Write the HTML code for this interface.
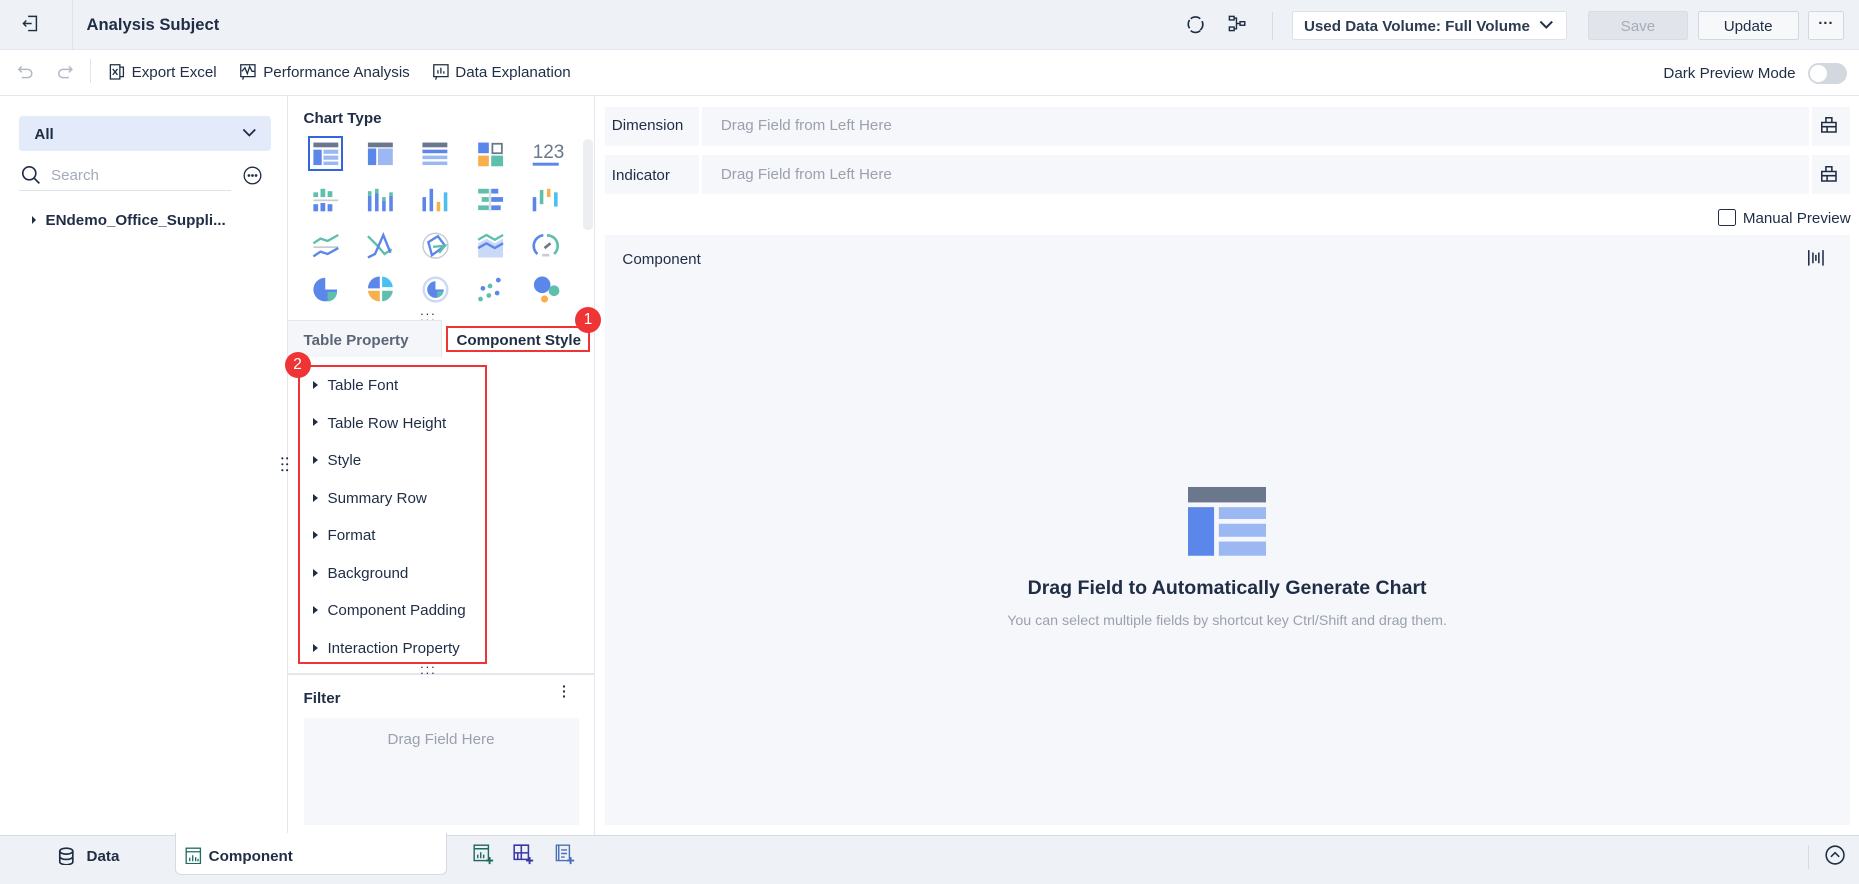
<!DOCTYPE html>
<html><head><meta charset="utf-8">
<style>
*{box-sizing:border-box;margin:0;padding:0}
html,body{width:1859px;height:884px;overflow:hidden;background:#fff}
#w{zoom:1.18559;width:1568px;height:746px;position:relative;font-family:"Liberation Sans",sans-serif;font-size:12.8px;color:#1f2d45;overflow:hidden}
.a{position:absolute}
.b{font-weight:bold}
.t{white-space:nowrap}
.tri{display:inline-block;width:0;height:0;border-left:5px solid #1f2d45;border-top:4px solid transparent;border-bottom:4px solid transparent;margin-right:8px;vertical-align:1px}
</style></head><body><div id="w">
<!-- top bar -->
<div class="a" style="left:0;top:0;width:1568px;height:42px;background:#eef1f6;border-bottom:1px solid #e1e5ec"></div>
<div class="a" style="left:61px;top:0;width:1px;height:42px;background:#dde1e8"></div>
<svg class="a" style="left:18px;top:12px" width="16" height="16" viewBox="0 0 16 16" fill="none" stroke="#1f2d45" stroke-width="1.2"><path d="M6 2h7v12H6M9 8H2M4.5 5.5L2 8l2.5 2.5"/></svg>
<div class="a b t" style="left:73px;top:13px;font-size:14px">Analysis Subject</div>
<svg class="a" style="left:1000px;top:12px" width="17" height="17" viewBox="0 0 17 17" fill="none" stroke="#1f2d45" stroke-width="1.4"><path d="M4 4a6 6 0 0 1 8 0M13.5 6a6 6 0 0 1-1.5 7.5M12 14a6 6 0 0 1-8 0M3 12a6 6 0 0 1 0-7"/></svg>
<svg class="a" style="left:1035px;top:12px" width="17" height="17" viewBox="0 0 17 17" fill="none" stroke="#1f2d45" stroke-width="1.2"><rect x="2" y="2" width="4" height="3"/><rect x="2" y="11" width="4" height="3"/><rect x="11" y="6.5" width="4" height="3"/><path d="M6 3.5h2v9H6M8 8h3"/></svg>
<div class="a" style="left:1073px;top:10px;width:1px;height:24px;background:#d6dae2"></div>
<div class="a b t" style="left:1090px;top:9px;width:232px;height:25px;background:#fff;border:1px solid #dde1e8;border-radius:2px;padding:5px 0 0 9px;color:#2c3a52">Used Data Volume: Full Volume</div>
<svg class="a" style="left:1297px;top:15px" width="14" height="12" viewBox="0 0 14 12" fill="none" stroke="#1f2d45" stroke-width="1.6"><path d="M2 3l5 5 5-5"/></svg>
<div class="a t" style="left:1339px;top:9px;width:85px;height:25px;background:#e1e4ea;border:1px solid #d8dce3;border-radius:2px;text-align:center;padding-top:5px;color:#a6adb9">Save</div>
<div class="a t" style="left:1432px;top:9px;width:85px;height:25px;background:#f7f8fa;border:1px solid #d3d7df;border-radius:2px;text-align:center;padding-top:5px">Update</div>
<div class="a t" style="left:1525px;top:9px;width:30px;height:25px;background:#f7f8fa;border:1px solid #d3d7df;border-radius:2px;text-align:center;padding-top:3px;font-weight:bold">···</div>
<!-- toolbar -->
<div class="a" style="left:0;top:80px;width:1568px;height:1px;background:#e4e7ec"></div>
<svg class="a" style="left:14px;top:54px" width="14" height="14" viewBox="0 0 14 14" fill="none" stroke="#b4bac5" stroke-width="1.3"><path d="M4 2L1.5 4.5 4 7M1.5 4.5H9a3.5 3.5 0 0 1 0 7H4"/></svg>
<svg class="a" style="left:48px;top:54px" width="14" height="14" viewBox="0 0 14 14" fill="none" stroke="#b4bac5" stroke-width="1.3"><path d="M10 2l2.5 2.5L10 7M12.5 4.5H5a3.5 3.5 0 0 0 0 7h5"/></svg>
<div class="a" style="left:76px;top:50px;width:1px;height:20px;background:#e1e4ea"></div>
<svg class="a" style="left:91px;top:53px" width="15" height="15" viewBox="0 0 15 15" fill="none" stroke="#1f2d45" stroke-width="1.1"><path d="M2 1.5h8v12H2zM10 3.5h3v8h-3"/><path d="M4 5l4 5M8 5l-4 5"/></svg>
<div class="a t" style="left:111px;top:54px">Export Excel</div>
<svg class="a" style="left:202px;top:53px" width="15" height="15" viewBox="0 0 15 15" fill="none" stroke="#1f2d45" stroke-width="1.1"><path d="M1.5 1.5h12v10h-12zM4 11.5L3 14"/><path d="M2.5 7l2.5-3 2 5 2-6 2 4h2"/></svg>
<div class="a t" style="left:222px;top:54px">Performance Analysis</div>
<svg class="a" style="left:364px;top:53px" width="15" height="15" viewBox="0 0 15 15" fill="none" stroke="#1f2d45" stroke-width="1.1"><path d="M1.5 1.5h12v10h-12zM4 11.5L3 14M5 9V6M7.5 9V4M10 9V7"/></svg>
<div class="a t" style="left:384px;top:54px">Data Explanation</div>
<div class="a t" style="left:1403px;top:55px">Dark Preview Mode</div>
<div class="a" style="left:1525px;top:53px;width:33px;height:18px;border-radius:9px;background:#d3d7de"></div>
<div class="a" style="left:1527px;top:55px;width:14px;height:14px;border-radius:7px;background:#fff"></div>
<!-- left panel -->
<div class="a" style="left:242px;top:81px;width:1px;height:623px;background:#e4e7ec"></div>
<div class="a" style="left:16px;top:98px;width:213px;height:29px;background:#e3ebfb;border-radius:3px"></div>
<div class="a b t" style="left:29px;top:106px">All</div>
<svg class="a" style="left:203px;top:106px" width="14" height="12" viewBox="0 0 14 12" fill="none" stroke="#1f2d45" stroke-width="1.5"><path d="M2 3l5 5 5-5"/></svg>
<svg class="a" style="left:18px;top:139px" width="17" height="17" viewBox="0 0 17 17" fill="none" stroke="#1f2d45" stroke-width="1.4"><circle cx="7" cy="7" r="5.5"/><path d="M11 11l4.5 4.5"/></svg>
<div class="a t" style="left:43px;top:141px;color:#a3aab7">Search</div>
<div class="a" style="left:16px;top:160px;width:179px;height:1px;background:#dde1e8"></div>
<svg class="a" style="left:205px;top:140px" width="16" height="16" viewBox="0 0 16 16" fill="none" stroke="#1f2d45" stroke-width="1.1"><circle cx="8" cy="8" r="7"/><circle cx="5" cy="8" r=".6" fill="#1f2d45"/><circle cx="8" cy="8" r=".6" fill="#1f2d45"/><circle cx="11" cy="8" r=".6" fill="#1f2d45"/></svg>
<div class="a b t" style="left:27px;top:179px"><span class="tri" style="border-left-width:4px;border-top-width:3.5px;border-bottom-width:3.5px;margin-right:8px"></span>ENdemo_Office_Suppli...</div>
<svg class="a" style="left:236px;top:385px" width="8" height="15" viewBox="0 0 8 15" fill="#1f2d45"><circle cx="2" cy="2" r=".9"/><circle cx="6" cy="2" r=".9"/><circle cx="2" cy="7" r=".9"/><circle cx="6" cy="7" r=".9"/><circle cx="2" cy="12" r=".9"/><circle cx="6" cy="12" r=".9"/></svg>
<!-- middle panel -->
<div class="a" style="left:501px;top:81px;width:1px;height:623px;background:#e4e7ec"></div>
<div class="a b t" style="left:256px;top:93px">Chart Type</div>
<div class="a" style="left:492px;top:117px;width:8px;height:77px;background:#eceef2;border-radius:4px"></div>
<div class="a" style="left:260px;top:115px;width:29px;height:29px;border:2px solid #3366dd"></div>
<svg class="a" style="left:262px;top:117px" width="236" height="140" viewBox="0 0 236 140">
<g transform="translate(2,3)"><rect width="21" height="4" fill="#6b778c"/><rect y="6" width="7" height="13" fill="#5b86ea"/><rect x="8.5" y="6" width="12.5" height="3.5" fill="#9cb8f3"/><rect x="8.5" y="11" width="12.5" height="3.5" fill="#9cb8f3"/><rect x="8.5" y="16" width="12.5" height="3" fill="#9cb8f3"/></g>
<g transform="translate(48,3)"><rect width="21" height="4" fill="#6b778c"/><rect y="5" width="7" height="14" fill="#5b86ea"/><rect x="8.5" y="5" width="12.5" height="14" fill="#9cb8f3"/></g>
<g transform="translate(94,3)"><rect width="21" height="4" fill="#6b778c"/><rect y="6" width="21" height="3" fill="#5b86ea"/><rect y="11" width="21" height="3" fill="#9cb8f3"/><rect y="16" width="21" height="3" fill="#9cb8f3"/></g>
<g transform="translate(141,3)"><rect width="9" height="9" fill="#5b86ea"/><rect x="12" y="1" width="8" height="8" fill="none" stroke="#6b778c" stroke-width="1.5"/><rect y="11" width="9" height="9" fill="#f7b04b"/><rect x="11" y="11" width="10" height="9" fill="#5ec0ac"/></g>
<g transform="translate(187,1)"><text x="0" y="15" font-family="Liberation Sans" font-size="16" fill="#6b778c">123</text><rect y="19" width="22" height="2.5" fill="#5b86ea"/></g>
<g transform="translate(2,42)"><rect x="6" y="0" width="4" height="7" fill="#5ec0ac"/><rect x="12" y="2" width="4" height="5" fill="#5ec0ac"/><rect x="0" y="3" width="4" height="4" fill="#5ec0ac"/><rect y="9" width="21" height="1.5" fill="#c6ccd6"/><rect x="0" y="13" width="4" height="6" fill="#5b86ea"/><rect x="6" y="12" width="4" height="7" fill="#5b86ea"/><rect x="12" y="13" width="4" height="6" fill="#5b86ea"/></g>
<g transform="translate(48,42)"><rect x="0" y="6" width="3" height="13" fill="#5b86ea"/><rect x="0" y="2" width="3" height="4" fill="#5ec0ac"/><rect x="6" y="4" width="3" height="15" fill="#5b86ea"/><rect x="6" y="0" width="3" height="4" fill="#5ec0ac"/><rect x="12" y="10" width="3" height="9" fill="#5b86ea"/><rect x="12" y="7" width="3" height="3" fill="#5ec0ac"/><rect x="18" y="6" width="3" height="13" fill="#5b86ea"/><rect x="18" y="3" width="3" height="3" fill="#5ec0ac"/></g>
<g transform="translate(94,42)"><rect x="0" y="7" width="3" height="12" fill="#5b86ea"/><rect x="6" y="0" width="3" height="19" fill="#5b86ea"/><rect x="12" y="11" width="3" height="8" fill="#f7b04b"/><rect x="18" y="3" width="3" height="16" fill="#4bbff0"/></g>
<g transform="translate(141,42)"><rect x="0" y="0" width="9" height="4" fill="#5ec0ac"/><rect x="11" y="0" width="6" height="4" fill="#5b86ea"/><rect x="3" y="7" width="6" height="4" fill="#5ec0ac"/><rect x="11" y="7" width="10" height="4" fill="#5b86ea"/><rect x="0" y="14" width="9" height="4" fill="#5ec0ac"/><rect x="11" y="14" width="8" height="4" fill="#5b86ea"/><rect x="9.5" y="0" width="1" height="19" fill="#c6ccd6"/></g>
<g transform="translate(187,42)"><rect x="0" y="7" width="3" height="12" fill="#5b86ea"/><rect x="6" y="1" width="3" height="12" fill="#5ec0ac"/><rect x="12" y="0" width="3" height="7" fill="#f7b04b"/><rect x="18" y="3" width="3" height="12" fill="#4bbff0"/></g>
<g transform="translate(2,80)" fill="none" stroke-width="2"><path d="M0 8l6-4 6 2 9-5" stroke="#5ec0ac"/><rect x="0" y="10.5" width="21" height="1.5" fill="#c6ccd6" stroke="none"/><path d="M0 19l6-4 6 2 9-5" stroke="#5b86ea"/></g>
<g transform="translate(48,80)" fill="none" stroke-width="2"><path d="M0 2l8 8 6 7 6-4" stroke="#5ec0ac"/><path d="M0 20l6-3 7-16 6 15" stroke="#5b86ea"/></g>
<g transform="translate(94,79)" fill="none"><circle cx="11" cy="11" r="10.5" stroke="#c6ccd6" stroke-width="1.2"/><path d="M5 8l8-5 6 8-11 8z" stroke="#5b86ea" stroke-width="2"/><path d="M9 12l10-1-5 6" stroke="#5ec0ac" stroke-width="2"/></g>
<g transform="translate(141,80)"><path d="M0 8l7-4 7 4 7-4v16H0z" fill="#c9d9f7"/><path d="M0 5l7-4 7 4 7-4" fill="none" stroke="#5ec0ac" stroke-width="2"/><path d="M0 12l7-4 7 4 7-4" fill="none" stroke="#5b86ea" stroke-width="2"/></g>
<g transform="translate(187,79)" fill="none" stroke-width="2.2"><path d="M4 18A9 9 0 0 1 9 2.2" stroke="#5b86ea"/><path d="M12 2.2A9 9 0 0 1 18 18" stroke="#5ec0ac"/><path d="M10 13l5-4" stroke="#6b778c"/><path d="M8 19h6" stroke="#c6ccd6"/></g>
<g transform="translate(1,116)"><path d="M11 1A10 10 0 1 0 21 11H11z" fill="#5b86ea"/><path d="M13 13h8a8 8 0 0 1-8 8z" fill="#5ec0ac"/></g>
<g transform="translate(48,116)"><path d="M10 0A10 10 0 0 0 0 10h10z" fill="#5b86ea"/><path d="M12 0a10 10 0 0 1 9 9h-9z" fill="#4bbff0"/><path d="M0 12a10 10 0 0 0 10 9v-9z" fill="#f7b04b"/><path d="M12 12h9a10 10 0 0 1-9 9z" fill="#5ec0ac"/></g>
<g transform="translate(94,116)"><circle cx="11" cy="11" r="10" fill="none" stroke="#c9d9f7" stroke-width="2"/><path d="M11 4a7 7 0 1 0 7 7h-7z" fill="#5b86ea"/><path d="M12.5 12.5h5a5 5 0 0 1-5 5z" fill="#5ec0ac"/></g>
<g transform="translate(141,116)"><circle cx="2" cy="19" r="2" fill="#5ec0ac"/><circle cx="9" cy="16" r="2" fill="#5ec0ac"/><circle cx="4" cy="10" r="2" fill="#5b86ea"/><circle cx="10" cy="8" r="2" fill="#5ec0ac"/><circle cx="16" cy="14" r="2" fill="#5b86ea"/><circle cx="17" cy="3" r="2" fill="#5b86ea"/></g>
<g transform="translate(187,116)"><circle cx="8" cy="7" r="7" fill="#5b86ea"/><circle cx="18" cy="12" r="4.5" fill="#5ec0ac"/><circle cx="10" cy="19" r="3" fill="#f7b04b"/></g>
</svg>
<div class="a" style="left:354px;top:262px;font-size:11px;line-height:5px;letter-spacing:1px">···<br>···</div>
<div class="a" style="left:243px;top:270px;width:130px;height:31px;background:#f4f6fa;border-top:1px solid #e4e7ec;border-right:1px solid #e4e7ec"></div>
<div class="a b t" style="left:256px;top:280px;color:#5b6577">Table Property</div>
<div class="a" style="left:376px;top:275px;width:122px;height:22px;border:2px solid #ee3434"></div>
<div class="a b t" style="left:385px;top:280px">Component Style</div>
<div class="a" style="left:485px;top:259px;width:22px;height:22px;border-radius:11px;background:#ee3434;color:#fff;text-align:center;line-height:22px;font-size:13px">1</div>
<div class="a" style="left:251px;top:308px;width:160px;height:252px;border:2px solid #ee3434"></div>
<div class="a" style="left:240px;top:297px;width:22px;height:22px;border-radius:11px;background:#ee3434;color:#fff;text-align:center;line-height:22px;font-size:13px">2</div>
<div class="a t" style="left:264px;top:318px;line-height:16px">
<div style="height:31.7px"><span class="tri"></span>Table Font</div>
<div style="height:31.7px"><span class="tri"></span>Table Row Height</div>
<div style="height:31.7px"><span class="tri"></span>Style</div>
<div style="height:31.7px"><span class="tri"></span>Summary Row</div>
<div style="height:31.7px"><span class="tri"></span>Format</div>
<div style="height:31.7px"><span class="tri"></span>Background</div>
<div style="height:31.7px"><span class="tri"></span>Component Padding</div>
<div style="height:31.7px"><span class="tri"></span>Interaction Property</div>
</div>
<div class="a" style="left:243px;top:568px;width:258px;height:1px;background:#e4e7ec"></div>
<div class="a" style="left:354px;top:560px;font-size:11px;line-height:5px;letter-spacing:1px">···<br>···</div>
<div class="a b t" style="left:256px;top:582px">Filter</div>
<div class="a b" style="left:474px;top:578px;font-size:12px;line-height:4px">·<br>·<br>·</div>
<div class="a t" style="left:256px;top:606px;width:232px;height:90px;background:#f6f7fb;text-align:center;padding-top:11px;color:#9aa1ad">Drag Field Here</div>
<!-- right -->
<div class="a" style="left:510px;top:90px;width:1050px;height:33px;background:#f6f7fb"></div>
<div class="a" style="left:590px;top:90px;width:2px;height:33px;background:#fff"></div>
<div class="a" style="left:1526px;top:90px;width:2px;height:33px;background:#fff"></div>
<div class="a t" style="left:516px;top:99px">Dimension</div>
<div class="a t" style="left:608px;top:99px;color:#9aa1ad">Drag Field from Left Here</div>
<div class="a" style="left:510px;top:131px;width:1050px;height:33px;background:#f6f7fb"></div>
<div class="a" style="left:590px;top:131px;width:2px;height:33px;background:#fff"></div>
<div class="a" style="left:1526px;top:131px;width:2px;height:33px;background:#fff"></div>
<div class="a t" style="left:516px;top:141px">Indicator</div>
<div class="a t" style="left:608px;top:140px;color:#9aa1ad">Drag Field from Left Here</div>
<svg class="a" style="left:1535px;top:98px" width="15" height="16" viewBox="0 0 15 16" fill="none" stroke="#1f2d45" stroke-width="1.3"><path d="M5 1.5h5v4H5zM1.5 5.5h12v8h-12zM1.5 9h12M6 9v4.5"/></svg>
<svg class="a" style="left:1535px;top:139px" width="15" height="16" viewBox="0 0 15 16" fill="none" stroke="#1f2d45" stroke-width="1.3"><path d="M5 1.5h5v4H5zM1.5 5.5h12v8h-12zM1.5 9h12M6 9v4.5"/></svg>
<div class="a" style="left:1449px;top:176px;width:15px;height:15px;border:1.3px solid #1f2d45;border-radius:2px"></div>
<div class="a t" style="left:1470px;top:177px">Manual Preview</div>
<div class="a" style="left:510px;top:198px;width:1050px;height:498px;background:#f6f7fb"></div>
<div class="a t" style="left:525px;top:212px">Component</div>
<svg class="a" style="left:1524px;top:210px" width="15" height="15" viewBox="0 0 15 15" fill="none" stroke="#1f2d45" stroke-width="1.3"><path d="M1.5 1v13M13.5 1v13M5 3v9M10 3v9M7.5 5v5"/></svg>
<svg class="a" style="left:1002px;top:411px" width="66" height="59" viewBox="0 0 66 59"><rect width="66" height="13" fill="#6b778c"/><rect y="17" width="22" height="41" fill="#5b86ea"/><rect x="26" y="17" width="40" height="10" fill="#9cb8f3"/><rect x="26" y="31" width="40" height="11" fill="#9cb8f3"/><rect x="26" y="46" width="40" height="12" fill="#9cb8f3"/></svg>
<div class="a b t" style="left:510px;top:487px;width:1050px;text-align:center;font-size:16.5px">Drag Field to Automatically Generate Chart</div>
<div class="a t" style="left:510px;top:517px;width:1050px;text-align:center;font-size:12px;color:#9aa1ad">You can select multiple fields by shortcut key Ctrl/Shift and drag them.</div>
<!-- bottom -->
<div class="a" style="left:0;top:704px;width:1568px;height:42px;background:#eef1f6;border-top:1px solid #d6dae2"></div>
<svg class="a" style="left:49px;top:714px" width="14" height="16" viewBox="0 0 14 16" fill="none" stroke="#1f2d45" stroke-width="1.4"><ellipse cx="7" cy="3.5" rx="5.5" ry="2.5"/><path d="M1.5 3.5v9c0 1.4 2.5 2.5 5.5 2.5s5.5-1.1 5.5-2.5v-9M1.5 8c0 1.4 2.5 2.5 5.5 2.5s5.5-1.1 5.5-2.5"/></svg>
<div class="a b t" style="left:73px;top:715px">Data</div>
<div class="a" style="left:148px;top:703px;width:229px;height:35px;background:#fff;border:1px solid #d6dae2;border-top:none;border-radius:0 0 5px 5px"></div>
<svg class="a" style="left:156px;top:714px" width="14" height="15" viewBox="0 0 14 15" fill="none" stroke="#1f6b5f" stroke-width="1.1"><rect x="1" y="1" width="12" height="13"/><path d="M1 4h12M4 12V9M6.5 12V7M9 12V8.5M11 12v-2"/></svg>
<div class="a b t" style="left:176px;top:715px">Component</div>
<svg class="a" style="left:399px;top:712px" width="18" height="18" viewBox="0 0 18 18" fill="none" stroke-width="1.2"><rect x="1" y="1" width="12" height="13" stroke="#1f6b5f"/><path d="M1 4h12M4 12V9M6.5 12V7M9 12V9" stroke="#1f6b5f"/><path d="M14 11v6M11 14h6" stroke="#1f6b5f" stroke-width="1.6"/></svg>
<svg class="a" style="left:433px;top:712px" width="18" height="18" viewBox="0 0 18 18" fill="none" stroke="#3b36a6" stroke-width="1.3"><path d="M1 1h12v12H1zM1 7.5h12M7 1v12M4 7.5V13"/><path d="M14 11v6M11 14h6" stroke-width="1.6"/></svg>
<svg class="a" style="left:467px;top:712px" width="18" height="18" viewBox="0 0 18 18" fill="none" stroke="#4a6fb8" stroke-width="1.2"><path d="M2 1h11v13H2zM4 1v13M6 5h5M6 8h5M6 11h3"/><path d="M14 11v6M11 14h6" stroke-width="1.6"/></svg>
<div class="a" style="left:1525px;top:713px;width:1px;height:20px;background:#d6dae2"></div>
<svg class="a" style="left:1539px;top:713px" width="17" height="17" viewBox="0 0 17 17" fill="none" stroke="#1f2d45" stroke-width="1.3"><circle cx="8.5" cy="8.5" r="7.5"/><path d="M5 10l3.5-3.5L12 10"/></svg>
</div></body></html>
